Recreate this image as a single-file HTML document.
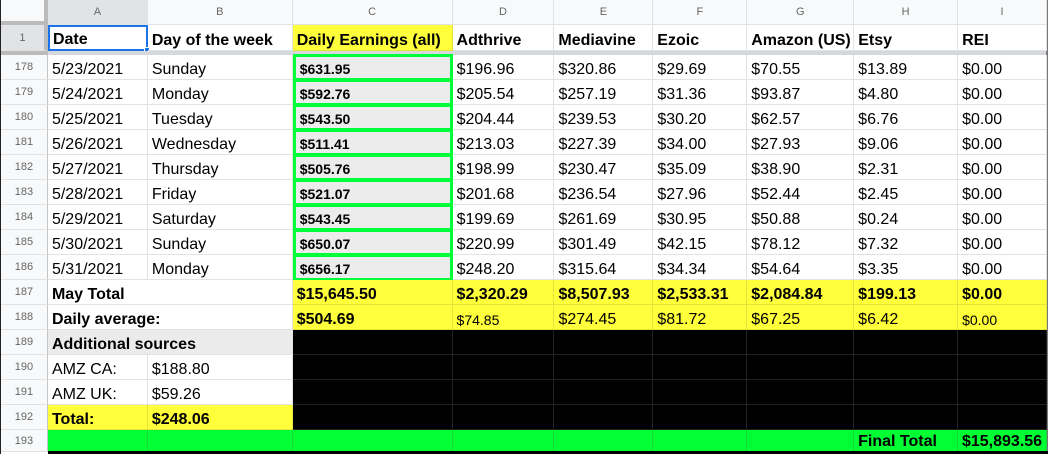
<!DOCTYPE html>
<html><head><style>
*{margin:0;padding:0;box-sizing:border-box}
body{width:1048px;height:454px;overflow:hidden;background:#fff;font-family:"Liberation Sans",Arial,sans-serif;color:#000;position:relative}
.r{position:absolute;left:1px;display:flex;width:1046px}
.c{height:100%;border-right:1px solid #e2e2e2;border-bottom:1px solid #e2e2e2;font-size:16px;padding:0 4px;white-space:nowrap;overflow:visible;display:flex;align-items:flex-end;padding-bottom:0px;position:relative}
.n{width:47px;background:#f8f9fa;color:#666;font-size:11px;justify-content:center;align-items:center;padding:0;border-right:1px solid #c6c6c6}
.w0{width:100px}.w1{width:145px}.w2{width:160px}.w3{width:102px}.w4{width:99px}.w5{width:94px}.w6{width:107px}.w7{width:104px}.w8{width:89px}
.hd .c{background:#f8f9fa;color:#666;font-size:11px;justify-content:center;align-items:center;padding:0}
.b{font-weight:bold}
.g{background:#ececec;font-weight:bold;font-size:14px;border:3px solid #00ff3a;margin-top:-1px;height:calc(100% + 2px);align-items:center;padding-top:2px;padding-bottom:0}
.y{background:#ffff3b;border-color:#e3e33a}
.k{background:#000;border-color:#222}
.gr{background:#00ff33;border-color:#1ad83a}
.s{font-size:14px;padding-bottom:1px}
</style></head><body>
<div style="position:absolute;left:0;top:0;width:1px;height:454px;background:#222"></div>
<div style="position:absolute;right:0;top:0;width:2px;height:454px;background:#777"></div>

<div class="r hd" style="top:0;height:25px">
<div class="c n" style="background:#f8f9fa;border-right:4px solid #bbb;border-bottom:4px solid #bbb"></div>
<div class="c w0" style="background:#e1e3e6">A</div><div class="c w1">B</div><div class="c w2">C</div><div class="c w3">D</div><div class="c w4">E</div><div class="c w5">F</div><div class="c w6">G</div><div class="c w7">H</div><div class="c w8">I</div>
</div>
<div class="r" style="top:25px;height:26px">
<div class="c n" style="background:#e1e3e6;border-right:4px solid #bbb">1</div>
<div class="c w0 b" style="border:2px solid #1a73e8;padding-left:3px">Date<span style="position:absolute;right:-4px;bottom:-4px;width:6px;height:6px;background:#1a73e8;border:1px solid #fff"></span></div>
<div class="c w1 b">Day of the week</div><div class="c w2 b y">Daily Earnings (all)</div><div class="c w3 b">Adthrive</div><div class="c w4 b">Mediavine</div><div class="c w5 b">Ezoic</div><div class="c w6 b">Amazon (US)</div><div class="c w7 b">Etsy</div><div class="c w8 b">REI</div>
</div>
<div style="position:absolute;left:1px;top:51px;width:1045px;height:4px;background:#d5d9de"></div>
<div style="position:absolute;left:1px;top:51px;width:47px;height:4px;background:#bbb"></div>

<div class="r" style="top:55px;height:25px"><div class="c n">178</div><div class="c w0">5/23/2021</div><div class="c w1">Sunday</div><div class="c w2 g">$631.95</div><div class="c w3">$196.96</div><div class="c w4">$320.86</div><div class="c w5">$29.69</div><div class="c w6">$70.55</div><div class="c w7">$13.89</div><div class="c w8">$0.00</div></div>
<div class="r" style="top:80px;height:25px"><div class="c n">179</div><div class="c w0">5/24/2021</div><div class="c w1">Monday</div><div class="c w2 g">$592.76</div><div class="c w3">$205.54</div><div class="c w4">$257.19</div><div class="c w5">$31.36</div><div class="c w6">$93.87</div><div class="c w7">$4.80</div><div class="c w8">$0.00</div></div>
<div class="r" style="top:105px;height:25px"><div class="c n">180</div><div class="c w0">5/25/2021</div><div class="c w1">Tuesday</div><div class="c w2 g">$543.50</div><div class="c w3">$204.44</div><div class="c w4">$239.53</div><div class="c w5">$30.20</div><div class="c w6">$62.57</div><div class="c w7">$6.76</div><div class="c w8">$0.00</div></div>
<div class="r" style="top:130px;height:25px"><div class="c n">181</div><div class="c w0">5/26/2021</div><div class="c w1">Wednesday</div><div class="c w2 g">$511.41</div><div class="c w3">$213.03</div><div class="c w4">$227.39</div><div class="c w5">$34.00</div><div class="c w6">$27.93</div><div class="c w7">$9.06</div><div class="c w8">$0.00</div></div>
<div class="r" style="top:155px;height:25px"><div class="c n">182</div><div class="c w0">5/27/2021</div><div class="c w1">Thursday</div><div class="c w2 g">$505.76</div><div class="c w3">$198.99</div><div class="c w4">$230.47</div><div class="c w5">$35.09</div><div class="c w6">$38.90</div><div class="c w7">$2.31</div><div class="c w8">$0.00</div></div>
<div class="r" style="top:180px;height:25px"><div class="c n">183</div><div class="c w0">5/28/2021</div><div class="c w1">Friday</div><div class="c w2 g">$521.07</div><div class="c w3">$201.68</div><div class="c w4">$236.54</div><div class="c w5">$27.96</div><div class="c w6">$52.44</div><div class="c w7">$2.45</div><div class="c w8">$0.00</div></div>
<div class="r" style="top:205px;height:25px"><div class="c n">184</div><div class="c w0">5/29/2021</div><div class="c w1">Saturday</div><div class="c w2 g">$543.45</div><div class="c w3">$199.69</div><div class="c w4">$261.69</div><div class="c w5">$30.95</div><div class="c w6">$50.88</div><div class="c w7">$0.24</div><div class="c w8">$0.00</div></div>
<div class="r" style="top:230px;height:25px"><div class="c n">185</div><div class="c w0">5/30/2021</div><div class="c w1">Sunday</div><div class="c w2 g">$650.07</div><div class="c w3">$220.99</div><div class="c w4">$301.49</div><div class="c w5">$42.15</div><div class="c w6">$78.12</div><div class="c w7">$7.32</div><div class="c w8">$0.00</div></div>
<div class="r" style="top:255px;height:25px"><div class="c n">186</div><div class="c w0">5/31/2021</div><div class="c w1">Monday</div><div class="c w2 g">$656.17</div><div class="c w3">$248.20</div><div class="c w4">$315.64</div><div class="c w5">$34.34</div><div class="c w6">$54.64</div><div class="c w7">$3.35</div><div class="c w8">$0.00</div></div>

<div class="r" style="top:280px;height:25px"><div class="c n">187</div><div class="c b" style="width:245px">May Total</div><div class="c w2 b y">$15,645.50</div><div class="c w3 b y">$2,320.29</div><div class="c w4 b y">$8,507.93</div><div class="c w5 b y">$2,533.31</div><div class="c w6 b y">$2,084.84</div><div class="c w7 b y">$199.13</div><div class="c w8 b y">$0.00</div></div>
<div class="r" style="top:305px;height:25px"><div class="c n">188</div><div class="c b" style="width:245px">Daily average:</div><div class="c w2 b y">$504.69</div><div class="c w3 y s">$74.85</div><div class="c w4 y">$274.45</div><div class="c w5 y">$81.72</div><div class="c w6 y">$67.25</div><div class="c w7 y">$6.42</div><div class="c w8 y s">$0.00</div></div>
<div class="r" style="top:330px;height:25px"><div class="c n">189</div><div class="c b" style="width:245px;background:#ebebeb">Additional sources</div><div class="c w2 k"></div><div class="c w3 k"></div><div class="c w4 k"></div><div class="c w5 k"></div><div class="c w6 k"></div><div class="c w7 k"></div><div class="c w8 k"></div></div>
<div class="r" style="top:355px;height:25px"><div class="c n">190</div><div class="c w0">AMZ CA:</div><div class="c w1">$188.80</div><div class="c w2 k"></div><div class="c w3 k"></div><div class="c w4 k"></div><div class="c w5 k"></div><div class="c w6 k"></div><div class="c w7 k"></div><div class="c w8 k"></div></div>
<div class="r" style="top:380px;height:25px"><div class="c n">191</div><div class="c w0">AMZ UK:</div><div class="c w1">$59.26</div><div class="c w2 k"></div><div class="c w3 k"></div><div class="c w4 k"></div><div class="c w5 k"></div><div class="c w6 k"></div><div class="c w7 k"></div><div class="c w8 k"></div></div>
<div class="r" style="top:405px;height:25px"><div class="c n">192</div><div class="c w0 b y">Total:</div><div class="c w1 b y">$248.06</div><div class="c w2 k"></div><div class="c w3 k"></div><div class="c w4 k"></div><div class="c w5 k"></div><div class="c w6 k"></div><div class="c w7 k"></div><div class="c w8 k"></div></div>
<div class="r" style="top:430px;height:22px"><div class="c n">193</div><div class="c w0 gr"></div><div class="c w1 gr"></div><div class="c w2 gr"></div><div class="c w3 gr"></div><div class="c w4 gr"></div><div class="c w5 gr"></div><div class="c w6 gr"></div><div class="c w7 gr b">Final Total</div><div class="c w8 gr b">$15,893.56</div></div>
<div style="position:absolute;left:48px;top:451px;width:1000px;height:3px;background:#000"></div>
</body></html>
